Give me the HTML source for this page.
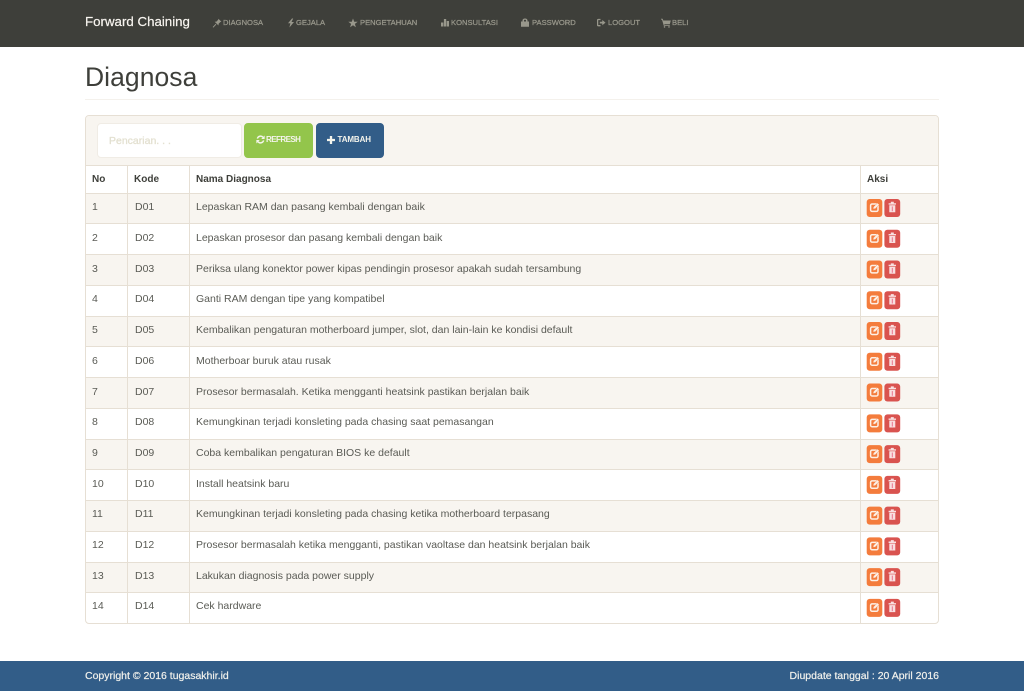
<!DOCTYPE html>
<html><head><meta charset="utf-8"><style>
*{box-sizing:border-box}
html,body{margin:0;padding:0;width:1024px;height:691px;overflow:hidden;background:#fff;font-family:"Liberation Sans",sans-serif}
.a{position:absolute;white-space:nowrap}
.nav{left:0;top:0;width:1024px;height:47px;background:#3e3f3a}
.brand{left:85px;top:14px;font-size:13.3px;line-height:16px;color:#f8f5f0;-webkit-text-stroke:.2px #f8f5f0}
.ni{top:17px;font-size:7.6px;line-height:11px;color:#98978b;-webkit-text-stroke:.25px #98978b}
.ic{position:absolute}
h1{position:absolute;margin:0;left:85px;top:61px;font-size:26.5px;line-height:32px;font-weight:normal;color:#3e3f3a;letter-spacing:.05px}
.hr{left:85px;top:99px;width:854px;height:1px;background:#f4f1ec}
.panel{left:85px;top:115px;width:854px;height:509px;border:1px solid #e6dfd4;border-radius:4px;overflow:hidden;background:#fff}
.head{left:0;top:0;width:852px;height:50px;background:#f8f5f0;border-bottom:1px solid #e6dfd4}
.input{left:11px;top:7px;width:145px;height:35px;background:#fff;border:1px solid #f0ece5;border-radius:4px;font-size:10.5px;color:#e3e0d0;padding:11px 11px;line-height:12px;-webkit-text-stroke:.3px #e3e0d0}
.btn{top:7px;height:35px;border-radius:4px;color:#f4f4ec;font-size:8px;font-weight:bold;line-height:32px}
.row{position:absolute;left:0;width:852px;height:30.76px;border-bottom:1px solid #e6dfd4;font-size:10.5px;color:#5a5b55}
.row span{position:absolute;top:7.5px;white-space:nowrap}
.row.t span{top:7px}
.row.o{background:#f8f5f0}
.vl{position:absolute;top:50px;bottom:0;width:1px;background:#e6dfd4}
.foot{left:0;top:661px;width:1024px;height:30px;background:#325d88;color:#f1f1ec;font-size:10.5px;line-height:30px;-webkit-text-stroke:.2px #f1f1ec}
</style></head><body>
<div class="a nav"></div>
<div class="a brand">Forward Chaining</div>

<svg class="ic" style="left:212px;top:17.500px" width="10" height="10" viewBox="0 0 10 10"><path d="M6.400 .8 9.400 3.800 8.400 4 6.600 5.800 6.500 7.500 2.700 3.700 4.400 3.600 6.200 1.800Z" fill="#98978b"/><path d="M4 6.200 1 9.300" stroke="#98978b" stroke-width=".9"/></svg>
<div class="a ni" style="left:223px">DIAGNOSA</div>
<svg class="ic" style="left:287px;top:18px" width="8" height="10" viewBox="0 0 8 10"><path d="M5 .5 1 5.200H3.400L2.400 9.500 7 4H4.500L6.200 .5Z" fill="#98978b"/></svg>
<div class="a ni" style="left:296px">GEJALA</div>
<svg class="ic" style="left:348px;top:17.500px" width="10" height="10" viewBox="0 0 10 10"><path d="M5 .5 6.200 3.800H9.700L6.900 5.900 7.900 9.300 5 7.300 2.100 9.300 3.100 5.900 .3 3.800H3.800Z" fill="#98978b"/></svg>
<div class="a ni" style="left:360px">PENGETAHUAN</div>
<svg class="ic" style="left:441px;top:18px" width="9" height="10" viewBox="0 0 9 10"><path d="M0 4.500H2.400V8.500H0ZM2.900 1H5.200V8.500H2.900ZM5.700 3H8V8.500H5.700Z" fill="#98978b"/></svg>
<div class="a ni" style="left:451px">KONSULTASI</div>
<svg class="ic" style="left:521px;top:18px" width="9" height="10" viewBox="0 0 9 10"><path d="M0 3.500H1.500V2.400C1.500 -.2 6.500 -.2 6.500 2.400V3.500H8V8.700H0ZM3 3.500H5V2.400C5 1.500 3 1.500 3 2.400Z" fill="#98978b"/></svg>
<div class="a ni" style="left:532px">PASSWORD</div>
<svg class="ic" style="left:597px;top:18px" width="10" height="10" viewBox="0 0 10 10"><path d="M3.500 1.500H1.300Q.6 1.500 .6 2.200V7Q.6 7.700 1.300 7.700H3.500" fill="none" stroke="#98978b" stroke-width="1.300"/><path d="M2.800 3.700H5.300V2L8.500 4.600 5.300 7.200V5.500H2.800Z" fill="#98978b"/></svg>
<div class="a ni" style="left:608px">LOGOUT</div>
<svg class="ic" style="left:661px;top:18px" width="10" height="10" viewBox="0 0 10 10"><path d="M0 .8H1.600L2.300 2.500H9.800L8.800 6.300H3.300L3.500 7H8.800V7.800H2.800L1 1.600H0Z" fill="#98978b"/><circle cx="3.500" cy="8.900" r=".8" fill="#98978b"/><circle cx="8" cy="8.900" r=".8" fill="#98978b"/></svg>
<div class="a ni" style="left:672px">BELI</div>

<h1>Diagnosa</h1>
<div class="a hr"></div>

<div class="a panel">
<div class="a head"></div>
<div class="a input">Pencarian. . .</div>
<div class="a btn" style="left:158px;width:69px;background:#93c54b;border:1px solid #93c54b;padding-left:21px;letter-spacing:-.55px">REFRESH
<svg style="position:absolute;left:11px;top:11px" width="9" height="9" viewBox="0 0 10 10"><path d="M1.500 4A3.700 3.700 0 0 1 7.800 2.500M8.500 6A3.700 3.700 0 0 1 2.200 7.500" fill="none" stroke="#f4f4ec" stroke-width="1.600"/><path d="M9.600 .6V4.400H5.800ZM.4 9.400V5.600H4.200Z" fill="#f4f4ec"/></svg></div>
<div class="a btn" style="left:230px;width:68px;background:#325d88;border:1px solid #325d88;padding-left:20.500px;letter-spacing:-.1px">TAMBAH
<svg style="position:absolute;left:10.300px;top:12px" width="8" height="8" viewBox="0 0 9 9"><path d="M3.200 0H5.800V3.200H9V5.800H5.800V9H3.200V5.800H0V3.200H3.200Z" fill="#f4f4ec"/></svg></div>

<div class="row" style="top:50px;height:27.54px;font-weight:bold;font-size:10px;color:#3e3f3a;line-height:28px"><span style="left:6px;top:0">No</span><span style="left:48px;top:0">Kode</span><span style="left:110px;top:0">Nama Diagnosa</span><span style="left:781px;top:0">Aksi</span></div>
<div class="row o" style="top:77.54px"><span style="left:6px">1</span><span style="left:49px">D01</span><span style="left:110px">Lepaskan RAM dan pasang kembali dengan baik</span></div>
<div class="row" style="top:108.3px"><span style="left:6px">2</span><span style="left:49px">D02</span><span style="left:110px">Lepaskan prosesor dan pasang kembali dengan baik</span></div>
<div class="row o" style="top:139.06px"><span style="left:6px">3</span><span style="left:49px">D03</span><span style="left:110px">Periksa ulang konektor power kipas pendingin prosesor apakah sudah tersambung</span></div>
<div class="row" style="top:169.82px"><span style="left:6px">4</span><span style="left:49px">D04</span><span style="left:110px">Ganti RAM dengan tipe yang kompatibel</span></div>
<div class="row o" style="top:200.58px"><span style="left:6px">5</span><span style="left:49px">D05</span><span style="left:110px">Kembalikan pengaturan motherboard jumper, slot, dan lain-lain ke kondisi default</span></div>
<div class="row" style="top:231.34px"><span style="left:6px">6</span><span style="left:49px">D06</span><span style="left:110px">Motherboar buruk atau rusak</span></div>
<div class="row o" style="top:262.1px"><span style="left:6px">7</span><span style="left:49px">D07</span><span style="left:110px">Prosesor bermasalah. Ketika mengganti heatsink pastikan berjalan baik</span></div>
<div class="row" style="top:292.86px"><span style="left:6px">8</span><span style="left:49px">D08</span><span style="left:110px">Kemungkinan terjadi konsleting pada chasing saat pemasangan</span></div>
<div class="row o" style="top:323.62px"><span style="left:6px">9</span><span style="left:49px">D09</span><span style="left:110px">Coba kembalikan pengaturan BIOS ke default</span></div>
<div class="row" style="top:354.38px"><span style="left:6px">10</span><span style="left:49px">D10</span><span style="left:110px">Install heatsink baru</span></div>
<div class="row o t" style="top:385.14px"><span style="left:6px">11</span><span style="left:49px">D11</span><span style="left:110px">Kemungkinan terjadi konsleting pada chasing ketika motherboard terpasang</span></div>
<div class="row" style="top:415.9px"><span style="left:6px">12</span><span style="left:49px">D12</span><span style="left:110px">Prosesor bermasalah ketika mengganti, pastikan vaoltase dan heatsink berjalan baik</span></div>
<div class="row o" style="top:446.66px"><span style="left:6px">13</span><span style="left:49px">D13</span><span style="left:110px">Lakukan diagnosis pada power supply</span></div>
<div class="row t" style="top:477.42px;border-bottom:0"><span style="left:6px">14</span><span style="left:49px">D14</span><span style="left:110px">Cek hardware</span></div>
<div class="vl" style="left:41px"></div><div class="vl" style="left:103px"></div><div class="vl" style="left:774px"></div>
<svg style="position:absolute;left:0;top:0" width="852" height="507">
<defs>
<g id="bt">
<rect x="780.7" width="15.6" height="18" rx="3" fill="#f47c3c"/>
<rect x="784.6" y="5" width="7.400" height="7.400" rx="1.500" fill="none" stroke="#fdf0e6" stroke-width="1.500"/>
<path d="M787 10 787.500 8 791.500 4 793.200 5.700 789.200 9.700Z" fill="#fdf0e6" stroke="#f47c3c" stroke-width=".4"/>
<rect x="798.400" width="15.800" height="18" rx="3" fill="#d9534f"/>
<path d="M802.600 4.200H804.800V2.800H807.800V4.200H810V5.600H802.600ZM803.300 6.200H809.300V13.200H803.300Z" fill="#f9dfe0"/>
<path d="M806.300 7.500V12.200" stroke="#e8738c" stroke-width="1"/>
</g>
</defs>
<use href="#bt" y="83"/><use href="#bt" y="113.76"/><use href="#bt" y="144.52"/><use href="#bt" y="175.28"/><use href="#bt" y="206.04"/><use href="#bt" y="236.8"/><use href="#bt" y="267.56"/><use href="#bt" y="298.32"/><use href="#bt" y="329.08"/><use href="#bt" y="359.84"/><use href="#bt" y="390.6"/><use href="#bt" y="421.36"/><use href="#bt" y="452.12"/><use href="#bt" y="482.88"/>
</svg>
</div>

<div class="a foot"><span class="a" style="left:85px">Copyright © 2016 tugasakhir.id</span><span class="a" style="right:85px">Diupdate tanggal : 20 April 2016</span></div>
</body></html>
